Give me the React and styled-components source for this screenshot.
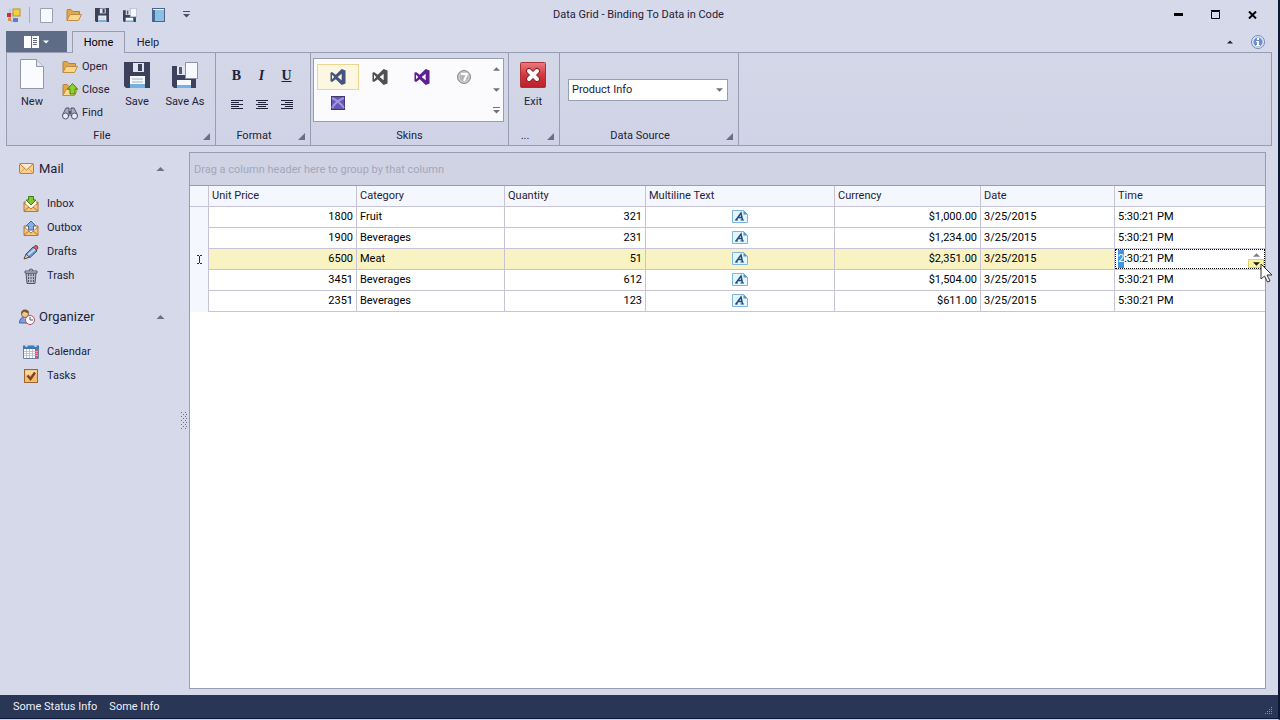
import React, { useEffect, useRef } from "react";
import styled, { createGlobalStyle, css } from "styled-components";

const GlobalStyle = createGlobalStyle`
  * {
    box-sizing: border-box;
  }

  body {
    margin: 0;
    background: #d6d9e9;
    color: #1e2238;
    font: 11px/16px Roboto, "Open Sans", sans-serif;
  }

  button, input, select {
    margin: 0;
    padding: 0;
    border: 0;
    background: none;
    color: inherit;
    font: inherit;
  }

  svg {
    display: block;
    flex: none;
  }
`;

const line = "#979eb4";
const cellLine = "#c6c3d6";

const Window = styled.div`
  display: flex;
  flex-direction: column;
  min-height: 100vh;
  border-right: 2px solid #0d1733;
  border-bottom: 1px solid #bcd6ee;
`;

const TitleBar = styled.header`
  display: grid;
  grid-template-columns: 1fr auto 1fr;
  align-items: center;
  height: 31px;
  padding: 0 7px 2px 6px;

  > h1 {
    margin: 0;
    font-size: 11px;
    font-weight: normal;
  }
`;

const QuickAccess = styled.div`
  display: flex;
  align-items: center;
`;

const QuickButton = styled.button`
  display: flex;
  align-items: center;
  justify-content: center;
  width: 28px;
  height: 24px;
`;

const AppIcon = styled.span`
  padding: 0 8px 0 1px;
`;

const Divider = styled.span`
  width: 1px;
  height: 16px;
  margin-right: 2px;
  background: #a9aec2;
`;

const WindowButtons = styled.div`
  display: flex;
  justify-content: flex-end;
`;

const WindowButton = styled.button`
  display: flex;
  align-items: center;
  justify-content: center;
  width: 37px;
  height: 24px;
`;

const TabRow = styled.nav`
  display: flex;
  height: 21px;
  padding: 0 13px 0 6px;
`;

const AppMenu = styled.button`
  display: flex;
  align-items: center;
  justify-content: center;
  gap: 4px;
  width: 61px;
  margin-right: 5px;
  background: #5f6c86;
`;

const Tab = styled.button`
  position: relative;
  width: ${(props) => (props.$active ? 53 : 46)}px;
  height: 22px;
  border: 1px solid ${(props) => (props.$active ? line : "transparent")};
  border-bottom: 0;
  background: ${(props) => (props.$active ? "#d5d8e8" : "none")};
  color: ${(props) => (props.$active ? "#000" : "#1e2238")};
`;

const TabTools = styled.div`
  display: flex;
  align-items: center;
  gap: 18px;
  margin-left: auto;

  button {
    display: flex;
    align-items: center;
  }
`;

const Ribbon = styled.div`
  display: flex;
  margin: 0 6px;
  height: 94px;
  border: 1px solid ${line};
  background: linear-gradient(#d4d7e7, #d0d3e5);
`;

const Group = styled.section`
  display: flex;
  flex-direction: column;
  width: ${(props) => props.$width}px;
  border-right: 1px solid ${line};
`;

const GroupBody = styled.div`
  display: flex;
  flex: 1;
  align-items: flex-start;
  padding: ${(props) => props.$pad || "2px 0 0"};
`;

const GroupFooter = styled.footer`
  display: flex;
  align-items: center;
  height: 18px;
  text-align: center;

  > span {
    flex: 1;
  }

  > button {
    display: flex;
    justify-content: center;
    width: 18px;
  }
`;

const LargeButton = styled.button`
  display: flex;
  flex-direction: column;
  align-items: center;
  width: ${(props) => props.$width}px;
  padding-top: 2px;
  line-height: 18px;
  white-space: nowrap;

  > svg {
    height: 36px;
  }
`;

const SmallButtons = styled.div`
  display: flex;
  flex-direction: column;
  width: 57px;
`;

const SmallButton = styled.button`
  display: flex;
  align-items: center;
  gap: 4px;
  height: 23px;
  padding-left: 5px;
`;

const FormatGrid = styled.div`
  display: grid;
  grid-template-columns: repeat(3, 25px);
  grid-auto-rows: 29px;
`;

const FormatButton = styled.button`
  display: flex;
  align-items: center;
  justify-content: center;
  font: bold 14px/16px "Liberation Serif", serif;
  font-style: ${(props) => (props.$italic ? "italic" : "normal")};
  text-decoration: ${(props) => (props.$underline ? "underline" : "none")};
`;

const Gallery = styled.div`
  display: flex;
  flex: 1;
  height: 64px;
  border: 1px solid ${line};
  background: #fbfbfe;
`;

const GalleryItems = styled.div`
  display: grid;
  flex: 1;
  grid-template-columns: repeat(4, 42px);
  grid-auto-rows: 26px;
  padding: 5px 0 0 3px;
`;

const GalleryItem = styled.button`
  display: flex;
  align-items: center;
  justify-content: center;
  border: 1px solid transparent;

  ${(props) =>
    props.$selected &&
    css`
      border-color: #ecd68d;
      background: #fcf7e0;
    `}
`;

const GalleryScroll = styled.div`
  display: flex;
  flex-direction: column;
  width: 14px;

  button {
    display: flex;
    flex: 1;
    align-items: center;
    justify-content: center;
  }
`;

const SelectBox = styled.label`
  display: flex;
  flex: 1;
  align-items: center;
  height: 22px;
  padding-right: 4px;
  border: 1px solid ${line};
  background: #fff;

  select {
    flex: 1;
    height: 20px;
    padding-left: 3px;
    appearance: none;
    outline: 0;
  }
`;

const Main = styled.main`
  display: flex;
  flex: 1;
`;

const Sidebar = styled.aside`
  flex: none;
  width: 178px;
  padding-top: 11px;
`;

const NavGroup = styled.section`
  margin-bottom: 17px;

  ul {
    margin: 0;
    padding: 11px 0 0;
    list-style: none;
  }
`;

const NavHeading = styled.h2`
  display: flex;
  align-items: center;
  gap: 4px;
  height: 24px;
  margin: 0;
  padding: 0 13px 0 19px;
  font-size: 13px;
  font-weight: normal;

  > button {
    margin-left: auto;
  }
`;

const NavLink = styled.a`
  display: flex;
  align-items: center;
  gap: 8px;
  height: 24px;
  padding-left: 23px;
  color: inherit;
  text-decoration: none;
`;

const Splitter = styled.div`
  display: flex;
  align-items: center;
  justify-content: center;
  width: 11px;
  cursor: col-resize;
`;

const GridPanel = styled.div`
  flex: 1;
  margin: 6px 12px 6px 0;
  border: 1px solid ${line};
  background: #fff;
`;

const GroupPanel = styled.div`
  height: 33px;
  padding: 0 4px;
  border-bottom: 1px solid ${line};
  background: #d0d3e4;
  color: #a3a7ba;
  line-height: 34px;
`;

const Table = styled.table`
  width: 100%;
  table-layout: fixed;
  border-collapse: separate;
  border-spacing: 0;
  color: #000;
`;

const Th = styled.th`
  height: 21px;
  padding: 0 3px;
  border-right: 1px solid ${cellLine};
  border-bottom: 1px solid ${cellLine};
  background: #f5f7fe;
  color: #1e2238;
  font-weight: normal;
  line-height: 20px;
  text-align: left;

  &:last-child {
    border-right: 0;
  }
`;

const Row = styled.tr`
  background: ${(props) => (props.$focused ? "#f9f2c3" : "#fff")};
`;

const Td = styled.td`
  height: 21px;
  padding: ${(props) => (props.$flush ? 0 : "0 3px")};
  border-right: 1px solid ${cellLine};
  border-bottom: 1px solid ${cellLine};
  line-height: 20px;
  text-align: ${(props) => props.$align || "left"};

  &:last-child {
    border-right: 0;
  }

  > svg {
    margin: 0 auto;
  }
`;

const Indicator = styled.td`
  border-right: 1px solid ${cellLine};
  background: #f5f7fe;

  > svg {
    margin: 0 auto;
  }
`;

const Editor = styled.div`
  position: relative;
  display: flex;
  height: 20px;
  border: 1px dotted #000;
  background: #fff;

  input {
    flex: 1;
    min-width: 0;
    padding-left: 2px;
    outline: 0;
  }

  input::selection {
    background: #3f94e6;
    color: #fff;
  }
`;

const Spin = styled.div`
  display: flex;
  flex-direction: column;
  width: 16px;
`;

const SpinButton = styled.button`
  display: flex;
  flex: 1;
  align-items: center;
  justify-content: center;
  border: 1px solid ${(props) => (props.$hot ? "#e2d36c" : "transparent")};
  background: ${(props) => (props.$hot ? "#f8f3a4" : "none")};
`;

const Pointer = styled.svg`
  position: absolute;
  top: 13px;
  right: -9px;
`;

const StatusBar = styled.footer`
  display: flex;
  align-items: center;
  gap: 12px;
  height: 24px;
  padding: 0 5px 0 13px;
  border-bottom: 1px solid #0f1a38;
  background: #293656;
  color: #eef0f8;

  > svg {
    margin: 8px 0 0 auto;
  }
`;

const Arrow = ({ up, color = "#4a5068", bar, size = 7 }) => (
  <svg width={size} height={bar ? 7 : 4} viewBox={bar ? "0 0 7 7" : "0 0 8 4"}>
    {bar && <path d="M0 .5h7" stroke={color} />}
    <path
      d={bar ? "M0 3h7L3.5 6.5z" : up ? "M0 4h8L4 0z" : "M0 0h8L4 4z"}
      fill={color}
    />
  </svg>
);

const Launcher = () => (
  <button aria-label="More options">
    <svg width="7" height="7">
      <path d="M7 0v7H0z" fill="#687087" />
    </svg>
  </button>
);

const LogoIcon = () => (
  <svg width="14" height="14" viewBox="0 0 14 14">
    <path d="M1 6h12M3 1v12h7" stroke="#a7abc0" fill="none" />
    <rect x="6" y="1" width="7" height="7" fill="#f3cf3c" stroke="#b8912a" />
    <rect x="0" y="5" width="4" height="4" fill="#cc2f35" />
    <rect x="1" y="10" width="3" height="3" fill="#d98a56" />
    <rect x="6" y="10" width="5" height="4" fill="#5b7fd0" />
  </svg>
);

const PageIcon = ({ width = 13, height = 16, fold }) => (
  <svg width={width} height={height} viewBox={fold ? "0 0 24 36" : "0 0 13 16"}>
    {fold ? (
      <>
        <path d="M.5 2.5h16l7 7v22H.5z" fill="#fafbff" stroke="#9096ac" />
        <path d="M16.5 2.5v7h7" fill="#dfe3f0" stroke="#9096ac" />
      </>
    ) : (
      <path d="M.5 1.5h12v14H.5z" fill="#f7f9ff" stroke="#9aa0b6" />
    )}
  </svg>
);

const FolderIcon = ({ arrow }) => (
  <svg width="16" height="16" viewBox="0 0 16 16">
    <path d="M1 13.500V3.500q0-1 1-1h3l2 2h6.500v3" fill="#e0a848" stroke="#b58038" />
    <path d="M1 13.500l3-6h11.500l-3 6z" fill="#fbd98a" stroke="#c08c46" />
    {arrow && (
      <path
        d="M10.500 1.500l5 5.500h-2.500v5h-5V7H5.500z"
        fill="#8fd02c"
        stroke="#47841b"
      />
    )}
  </svg>
);

const FindIcon = () => (
  <svg width="16" height="16" viewBox="0 0 16 16">
    <path
      d="M4 3h3v8H1V9zM12 3H9v8h6V9z"
      fill="#a9adbf"
      stroke="#4d536c"
    />
    <path d="M7 6h2v3H7z" fill="#4d536c" />
    <circle cx="3.500" cy="11" r="3" fill="#e8eaf4" stroke="#4d536c" />
    <circle cx="12.500" cy="11" r="3" fill="#e8eaf4" stroke="#4d536c" />
  </svg>
);

const SaveIcon = ({ size = 14, page }) => (
  <svg width={size} height={size} viewBox="0 0 26 26">
    {page ? (
      <>
        <path d="M0 4h24v22H2l-2-2z" fill="#3c425c" />
        <path d="M5 4h10v9H5z" fill="#e1e5ef" />
        <path d="M7 5h3v7H7z" fill="#555b74" />
        <path d="M5 18h14v8H5z" fill="#f5f9fe" />
        <path d="M5 23h14v3H5z" fill="#72b2e2" />
        <path d="M13.500.5h12v16h-12z" fill="#f7f9ff" stroke="#8b91a8" />
      </>
    ) : (
      <>
        <path d="M0 0h26v26H2l-2-2z" fill="#3c425c" />
        <path d="M9 1h11v9H9z" fill="#e1e5ef" />
        <path d="M14 2h4v7h-4z" fill="#3c425c" />
        <path d="M6 14h15v12H6z" fill="#f5f9fe" />
        <path d="M8 17h11M8 20h11" stroke="#a3adbf" />
        <path d="M6 22h15v4H6z" fill="#72b2e2" />
      </>
    )}
  </svg>
);

const LargeIcon = ({ page }) => (
  <svg width="26" height="36" viewBox="0 -5 26 36">
    <SaveIcon size={26} page={page} />
  </svg>
);

const BookIcon = () => (
  <svg width="13" height="14" viewBox="0 0 13 14">
    <rect x=".5" y=".5" width="12" height="13" fill="#8dbfe4" stroke="#4b6482" />
    <path d="M1 1h11v1H1z" fill="#e6f2fb" />
    <path d="M1 2h2v11H1z" fill="#3f6d9e" />
  </svg>
);

const AlignIcon = ({ align }) => {
  const start = { left: 0, center: 2, right: 4 }[align];
  return (
    <svg width="12" height="10">
      <path
        d={`M0 .5h12M${start} 2.500h8M0 4.500h12M${start} 6.500h8M0 8.500h12`}
        stroke="#1e2238"
      />
    </svg>
  );
};

const StudioIcon = ({ color }) => (
  <svg width="16" height="16" viewBox="0 0 24 24">
    <path
      fill={color}
      fillRule="evenodd"
      d="M17.500 0L8.600 8.800 3 4.500.7 5.600v12.800L3 19.500l5.600-4.300 8.900 8.800 5.800-2.300V2.300zM3 15.400V8.600L6.400 12zM11.500 12l6-4.800v9.600z"
    />
  </svg>
);

const SevenIcon = () => (
  <svg width="16" height="16" viewBox="0 0 16 16">
    <circle cx="8" cy="8" r="6.500" fill="#b5b5b8" stroke="#8b8b90" />
    <circle cx="8" cy="8" r="5" fill="none" stroke="#d8d8da" />
    <path d="M5 5h6L8 12" fill="none" stroke="#fff" strokeWidth="2" />
  </svg>
);

const CrossSkinIcon = () => (
  <svg width="14" height="14" viewBox="0 0 14 14">
    <rect x=".5" y=".5" width="13" height="13" fill="#6557b5" stroke="#41386d" />
    <path d="M1 2q7 3 12 10M1 12Q5 5 13 2" stroke="#a096e0" strokeWidth="2" fill="none" />
  </svg>
);

const ExitIcon = () => (
  <svg width="26" height="36" viewBox="0 -5 26 36">
    <defs>
      <linearGradient id="exit" x2="0" y2="1">
        <stop offset="0" stopColor="#ea7c80" />
        <stop offset=".5" stopColor="#d2373f" />
        <stop offset="1" stopColor="#b9202b" />
      </linearGradient>
    </defs>
    <rect x=".5" y=".5" width="25" height="25" rx="1" fill="url(#exit)" stroke="#a9323a" />
    <path d="M9 9l8 8M17 9l-8 8" stroke="#8f1d25" strokeWidth="6" strokeLinecap="round" />
    <path d="M9 9l8 8M17 9l-8 8" stroke="#fff" strokeWidth="4" strokeLinecap="round" />
  </svg>
);

const MenuIcon = () => (
  <svg width="15" height="12" viewBox="0 0 15 12">
    <path d="M0 0h7v12H0zM8 0h7v12H8z" fill="#fff" />
    <path d="M9 2.500h4M9 4.500h4M9 6.500h4M9 8.500h4" stroke="#5f6c86" />
  </svg>
);

const InfoIcon = () => (
  <svg width="14" height="14" viewBox="0 0 14 14">
    <circle cx="7" cy="7" r="6.500" fill="#dfe6f5" stroke="#7288b8" />
    <circle cx="7" cy="7" r="4.500" fill="#6f8dcb" />
    <path d="M6 3h2v2H6zM5 6h3v4h1v1H5v-1h1V7H5z" fill="#fff" />
  </svg>
);

const MailIcon = () => (
  <svg width="16" height="16" viewBox="0 0 16 16">
    <rect x=".5" y="2.500" width="14" height="10" rx="1" fill="#fbcf8c" stroke="#b8803f" />
    <path d="M1 12l5-5M14 12l-5-5" stroke="#d9a05c" />
    <path d="M1 3l6.500 6L14 3" fill="#ffebc8" stroke="#b8803f" />
  </svg>
);

const TrayIcon = ({ out }) => (
  <svg width="16" height="16" viewBox="0 0 16 16">
    <path d="M1 6h14v9.500H1z" fill="#f6c57c" stroke="#b07a3c" />
    <path d="M3 5h10v5l-5 3-5-3z" fill="#fff6e3" />
    <path d="M1 7l7 6 7-6M1 15l5-4M15 15l-5-4" fill="none" stroke="#b07a3c" />
    {out ? (
      <path d="M8 1l5 5h-2.500v4h-5V6H3z" fill="#88aee0" stroke="#4769a0" />
    ) : (
      <path d="M5.500.5h5V4H13L8 9 3 4h2.500z" fill="#83c932" stroke="#3f7d1c" />
    )}
  </svg>
);

const PencilIcon = () => (
  <svg width="16" height="16" viewBox="0 0 16 16">
    <path d="M1 15l2-5 4 3z" fill="#eac69a" stroke="#5a4a4a" />
    <path d="M3 10l7-7 4 4-7 6.500z" fill="#7197cc" stroke="#3c5278" />
    <path d="M5 11l7-6" stroke="#c4d8f1" strokeWidth="2" />
    <path d="M10.500 3l1.500-1.500q3-.5 3 2.500L13.500 6z" fill="#cf6363" stroke="#84424c" />
  </svg>
);

const TrashIcon = () => (
  <svg width="16" height="16" viewBox="0 0 16 16">
    <path d="M3 5h10l-1 10.500H4z" fill="#b7bac7" stroke="#505568" />
    <path d="M5.500 6v9M8 6v9M10.500 6v9" stroke="#505568" strokeDasharray="2 1" />
    <path d="M2 3h12v2H2z" fill="#d9dbe4" stroke="#505568" />
    <path d="M6 3q0-2 2-2t2 2" fill="none" stroke="#505568" />
  </svg>
);

const OrganizerIcon = () => (
  <svg width="16" height="16" viewBox="0 0 16 16">
    <path d="M.5 14q0-6 5.500-6t5 6z" fill="#7a9fda" stroke="#47649b" />
    <path d="M5 8h3l-1 5z" fill="#fff" />
    <circle cx="6" cy="5" r="3.500" fill="#f0c79c" stroke="#8d6238" />
    <path d="M2 5q0-4.500 4-4.500T10 4Q7 4 5 2.500 4 4 2 5z" fill="#80552e" />
    <circle cx="11" cy="11" r="4.500" fill="#fff" stroke="#b24b5c" />
    <path d="M11 8v3h3" fill="none" stroke="#45506e" />
  </svg>
);

const CalendarIcon = () => (
  <svg width="16" height="16" viewBox="0 0 16 16">
    <path d="M.5 3.500h15v11H.5z" fill="#fff" stroke="#6b7fa8" />
    <path d="M0 1.500h16V5H0z" fill="#4179b5" />
    <path d="M3.500 0v3M12.500 0v3" stroke="#c7dcf2" strokeWidth="2" />
    <path d="M1 7.500h14M1 9.500h14M1 11.500h14M3.500 5v9M6.500 5v9M9.500 5v9" stroke="#a1b1cf" strokeWidth=".7" />
    <path d="M12 5h3v9h-3z" fill="#dd4d63" />
    <path d="M12 7.500h3M12 9.500h3M12 11.500h3" stroke="#f2b6c0" strokeWidth=".7" />
  </svg>
);

const TasksIcon = () => (
  <svg width="16" height="16" viewBox="0 0 16 16">
    <rect x="1.500" y="1.500" width="13" height="13" fill="#f5bd72" stroke="#9c662e" />
    <path d="M2.500 2.500h11v4h-11z" fill="#fbd7a0" />
    <path d="M4.500 7.500l3 3.500L12 4.500" fill="none" stroke="#7a4624" strokeWidth="2.500" />
  </svg>
);

const TextIcon = () => (
  <svg width="16" height="14" viewBox="0 0 16 14">
    <path d="M.5.500h11l4 4v8H.5z" fill="#e3f5fd" stroke="#7cb5de" />
    <path d="M11.500.500l4 4h-4z" fill="#4b95d4" />
    <path d="M4 10l5-7 1.500 7M6 7.500h4" fill="none" stroke="#1f4f80" strokeWidth="1.500" />
    <path d="M3 10h3M8.500 10h3.500" stroke="#1f4f80" />
  </svg>
);

const CaretIcon = () => (
  <svg width="5" height="9">
    <path d="M0 .5h2M3 .5h2M2.500 1v7M0 8.500h2M3 8.500h2" stroke="#2a2e42" />
  </svg>
);

const SplitterDots = () => (
  <svg width="6" height="18">
    {[0, 2, 4, 6, 8, 10, 12, 14, 16].map((y) => (
      <path
        key={y}
        d={`M${y % 4 ? 2 : 0} ${y + 0.5}h1M${y % 4 ? 5 : 4} ${y + 0.5}h1`}
        stroke="#6d7288"
      />
    ))}
  </svg>
);

const SizeGrip = () => (
  <svg width="8" height="8">
    <path
      d="M6 .5h1M4 2.500h1M6 2.500h1M2 4.500h1M4 4.500h1M6 4.500h1M0 6.500h1M2 6.500h1M4 6.500h1M6 6.500h1"
      stroke="#8992ad"
    />
  </svg>
);

const navGroups = [
  {
    title: "Mail",
    icon: <MailIcon />,
    items: [
      { label: "Inbox", icon: <TrayIcon /> },
      { label: "Outbox", icon: <TrayIcon out /> },
      { label: "Drafts", icon: <PencilIcon /> },
      { label: "Trash", icon: <TrashIcon /> },
    ],
  },
  {
    title: "Organizer",
    icon: <OrganizerIcon />,
    items: [
      { label: "Calendar", icon: <CalendarIcon /> },
      { label: "Tasks", icon: <TasksIcon /> },
    ],
  },
];

const columns = [
  { title: "Unit Price", width: 148 },
  { title: "Category", width: 148 },
  { title: "Quantity", width: 141 },
  { title: "Multiline Text", width: 189 },
  { title: "Currency", width: 146 },
  { title: "Date", width: 134 },
  { title: "Time", width: 150 },
];

const rows = [
  { price: 1800, category: "Fruit", quantity: 321, currency: "$1,000.00" },
  { price: 1900, category: "Beverages", quantity: 231, currency: "$1,234.00" },
  { price: 6500, category: "Meat", quantity: 51, currency: "$2,351.00", editing: true },
  { price: 3451, category: "Beverages", quantity: 612, currency: "$1,504.00" },
  { price: 2351, category: "Beverages", quantity: 123, currency: "$611.00" },
];

const TimeEditor = () => {
  const input = useRef(null);

  useEffect(() => {
    input.current.focus();
    input.current.setSelectionRange(0, 1);
  }, []);

  return (
    <Editor>
      <input ref={input} aria-label="Time" defaultValue="2:30:21 PM" />
      <Spin>
        <SpinButton aria-label="Increase">
          <Arrow up color="#777c90" />
        </SpinButton>
        <SpinButton $hot aria-label="Decrease">
          <Arrow color="#1b1b1b" />
        </SpinButton>
      </Spin>
      <Pointer width="13" height="20" viewBox="0 0 13 20">
        <path
          d="M1 1v15l3.500-3 3 6 2.500-1-3-6h5z"
          fill="#fff"
          stroke="#333"
        />
      </Pointer>
    </Editor>
  );
};

const DataGrid = () => (
  <GridPanel>
    <GroupPanel>Drag a column header here to group by that column</GroupPanel>
    <Table>
      <colgroup>
        <col width="19" />
        {columns.map((column) => (
          <col key={column.title} width={column.width} />
        ))}
      </colgroup>
      <thead>
        <tr>
          <Th as="td" />
          {columns.map((column) => (
            <Th key={column.title}>{column.title}</Th>
          ))}
        </tr>
      </thead>
      <tbody>
        {rows.map((row) => (
          <Row key={row.price} $focused={row.editing}>
            <Indicator>{row.editing && <CaretIcon />}</Indicator>
            <Td $align="right">{row.price}</Td>
            <Td>{row.category}</Td>
            <Td $align="right">{row.quantity}</Td>
            <Td>
              <TextIcon />
            </Td>
            <Td $align="right">{row.currency}</Td>
            <Td>3/25/2015</Td>
            <Td $flush={row.editing}>
              {row.editing ? <TimeEditor /> : "5:30:21 PM"}
            </Td>
          </Row>
        ))}
      </tbody>
    </Table>
  </GridPanel>
);

const RibbonGroup = ({ title, width, pad, launcher, children }) => (
  <Group $width={width}>
    <GroupBody $pad={pad}>{children}</GroupBody>
    <GroupFooter>
      <span>{title}</span>
      {launcher && <Launcher />}
    </GroupFooter>
  </Group>
);

const MainRibbon = () => (
  <Ribbon>
    <RibbonGroup title="File" width={209} launcher>
      <LargeButton $width={50}>
        <PageIcon width={24} height={36} fold />
        New
      </LargeButton>
      <SmallButtons>
        <SmallButton>
          <FolderIcon />
          Open
        </SmallButton>
        <SmallButton>
          <FolderIcon arrow />
          Close
        </SmallButton>
        <SmallButton>
          <FindIcon />
          Find
        </SmallButton>
      </SmallButtons>
      <LargeButton $width={46}>
        <LargeIcon />
        Save
      </LargeButton>
      <LargeButton $width={50}>
        <LargeIcon page />
        Save As
      </LargeButton>
    </RibbonGroup>
    <RibbonGroup title="Format" width={95} pad="8px 0 0 8px" launcher>
      <FormatGrid>
        <FormatButton>B</FormatButton>
        <FormatButton $italic>I</FormatButton>
        <FormatButton $underline>U</FormatButton>
        <FormatButton aria-label="Align left">
          <AlignIcon align="left" />
        </FormatButton>
        <FormatButton aria-label="Align center">
          <AlignIcon align="center" />
        </FormatButton>
        <FormatButton aria-label="Align right">
          <AlignIcon align="right" />
        </FormatButton>
      </FormatGrid>
    </RibbonGroup>
    <RibbonGroup title="Skins" width={198} pad="5px 4px 0 2px">
      <Gallery>
        <GalleryItems>
          <GalleryItem $selected aria-label="Blue">
            <StudioIcon color="#46557f" />
          </GalleryItem>
          <GalleryItem aria-label="Dark">
            <StudioIcon color="#505050" />
          </GalleryItem>
          <GalleryItem aria-label="Light">
            <StudioIcon color="#5c2090" />
          </GalleryItem>
          <GalleryItem aria-label="Seven">
            <SevenIcon />
          </GalleryItem>
          <GalleryItem aria-label="Violet">
            <CrossSkinIcon />
          </GalleryItem>
        </GalleryItems>
        <GalleryScroll>
          <button aria-label="Scroll up">
            <Arrow up color="#6c7186" />
          </button>
          <button aria-label="Scroll down">
            <Arrow color="#6c7186" />
          </button>
          <button aria-label="Expand gallery">
            <Arrow bar color="#6c7186" />
          </button>
        </GalleryScroll>
      </Gallery>
    </RibbonGroup>
    <RibbonGroup title="..." width={51} launcher>
      <LargeButton $width={48}>
        <ExitIcon />
        Exit
      </LargeButton>
    </RibbonGroup>
    <RibbonGroup title="Data Source" width={179} pad="26px 10px 0 8px" launcher>
      <SelectBox>
        <select aria-label="Data Source">
          <option>Product Info</option>
        </select>
        <Arrow color="#6c7186" />
      </SelectBox>
    </RibbonGroup>
  </Ribbon>
);

const App = () => (
  <>
    <GlobalStyle />
    <Window>
      <TitleBar>
        <QuickAccess>
          <AppIcon>
            <LogoIcon />
          </AppIcon>
          <Divider />
          <QuickButton aria-label="New">
            <PageIcon />
          </QuickButton>
          <QuickButton aria-label="Open">
            <FolderIcon />
          </QuickButton>
          <QuickButton aria-label="Save">
            <SaveIcon />
          </QuickButton>
          <QuickButton aria-label="Save As">
            <SaveIcon page />
          </QuickButton>
          <QuickButton aria-label="Help">
            <BookIcon />
          </QuickButton>
          <QuickButton aria-label="Customize">
            <Arrow bar />
          </QuickButton>
        </QuickAccess>
        <h1>Data Grid - Binding To Data in Code</h1>
        <WindowButtons>
          <WindowButton aria-label="Minimize">
            <svg width="9" height="3">
              <path d="M0 0h9v3H0z" />
            </svg>
          </WindowButton>
          <WindowButton aria-label="Maximize">
            <svg width="9" height="9">
              <path d="M.5 1.500h8v7h-8zM0 .5h9" fill="none" stroke="#000" />
            </svg>
          </WindowButton>
          <WindowButton aria-label="Close">
            <svg width="9" height="8">
              <path d="M1 .5l7 7M8 .5l-7 7" stroke="#000" strokeWidth="2" />
            </svg>
          </WindowButton>
        </WindowButtons>
      </TitleBar>
      <TabRow>
        <AppMenu aria-label="Application menu">
          <MenuIcon />
          <Arrow color="#fff" size={6} />
        </AppMenu>
        <Tab $active>Home</Tab>
        <Tab>Help</Tab>
        <TabTools>
          <button aria-label="Collapse ribbon">
            <Arrow up size={6} color="#1e2238" />
          </button>
          <button aria-label="About">
            <InfoIcon />
          </button>
        </TabTools>
      </TabRow>
      <MainRibbon />
      <Main>
        <Sidebar>
          {navGroups.map((group) => (
            <NavGroup key={group.title}>
              <NavHeading>
                {group.icon}
                {group.title}
                <button aria-label={`Collapse ${group.title}`}>
                  <Arrow up size={9} color="#6c7186" />
                </button>
              </NavHeading>
              <ul>
                {group.items.map((item) => (
                  <li key={item.label}>
                    <NavLink href="#">
                      {item.icon}
                      {item.label}
                    </NavLink>
                  </li>
                ))}
              </ul>
            </NavGroup>
          ))}
        </Sidebar>
        <Splitter role="separator">
          <SplitterDots />
        </Splitter>
        <DataGrid />
      </Main>
      <StatusBar>
        <span>Some Status Info</span>
        <span>Some Info</span>
        <SizeGrip />
      </StatusBar>
    </Window>
  </>
);

export default App;
